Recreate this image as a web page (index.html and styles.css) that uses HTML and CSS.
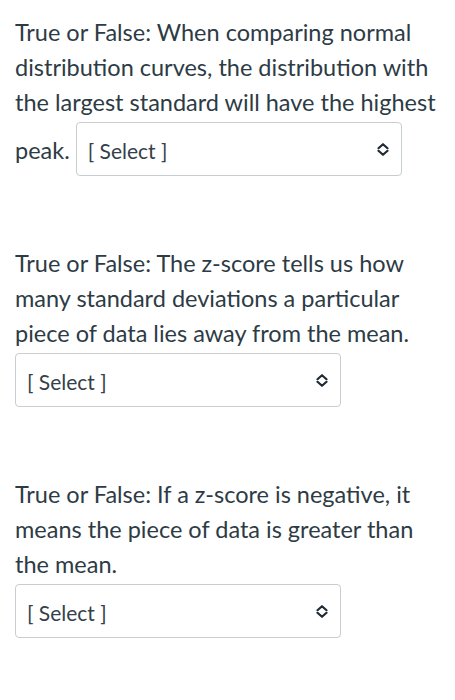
FILE: index.html
```html
<!DOCTYPE html>
<html lang="en">
<head>
<meta charset="utf-8">
<title>Quiz</title>
<link rel="stylesheet" href="styles.css">
</head>
<body>
<div class="quiz">
  <div class="question">True or False: When comparing normal distribution curves, the distribution with the largest standard will have the highest peak. <span class="select"><span class="select-text">[ Select ]</span><svg class="chev" width="12" height="13" viewBox="0 0 12 13"><polyline points="1.5,5.2 6,1.2 10.5,5.2" /><polyline points="1.5,7.8 6,11.8 10.5,7.8" /></svg></span></div>
  <div class="question">True or False: The z-score tells us how many standard deviations a particular piece of data lies away from the mean. <span class="select"><span class="select-text">[ Select ]</span><svg class="chev" width="12" height="13" viewBox="0 0 12 13"><polyline points="1.5,5.2 6,1.2 10.5,5.2" /><polyline points="1.5,7.8 6,11.8 10.5,7.8" /></svg></span></div>
  <div class="question">True or False: If a z-score is negative, it means the piece of data is greater than the mean. <span class="select"><span class="select-text">[ Select ]</span><svg class="chev" width="12" height="13" viewBox="0 0 12 13"><polyline points="1.5,5.2 6,1.2 10.5,5.2" /><polyline points="1.5,7.8 6,11.8 10.5,7.8" /></svg></span></div>
</div>
</body>
</html>
```
FILE: styles.css
```css
html, body {
  margin: 0;
  padding: 0;
  background: #ffffff;
}
body {
  font-family: Lato, "Open Sans", sans-serif;
  color: #2d3b45;
}
.quiz {
  padding: 15px 0 0 15px;
  width: 430px;
}
.question {
  font-size: 23.5px;
  line-height: 35px;
  margin-bottom: 68px;
}
.select {
  display: inline-flex;
  align-items: center;
  justify-content: space-between;
  box-sizing: border-box;
  width: 326px;
  height: 54px;
  margin: 2px 0;
  padding: 4px 12px 0 11px;
  border: 1px solid #c7cdd1;
  border-radius: 4px;
  background: #fff;
  vertical-align: baseline;
}
.select-text {
  line-height: 26px;
  font-size: 21px;
  color: #34414b;
}
.chev {
  fill: none;
  stroke: #1f2a33;
  stroke-width: 2.2;
  stroke-linecap: round;
  stroke-linejoin: round;
  margin-top: -4px;
}
```
